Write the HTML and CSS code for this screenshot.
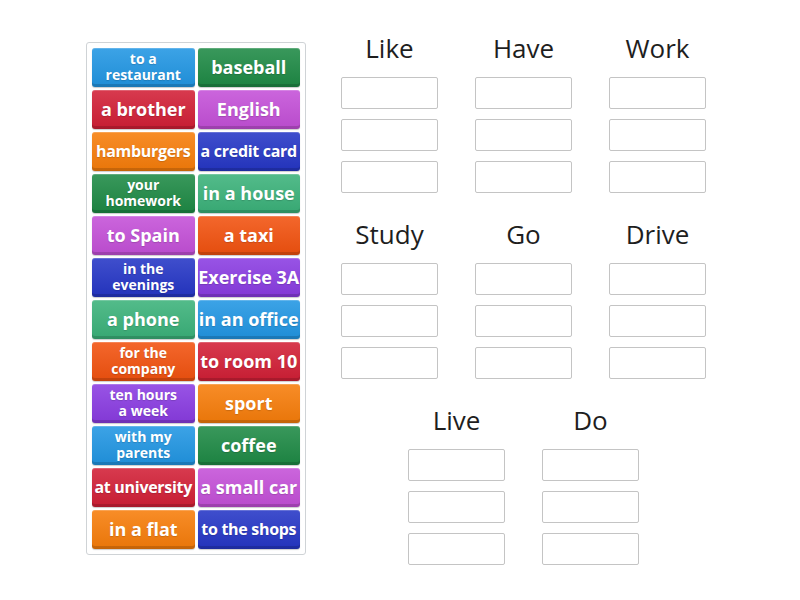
FILE: index.html
```html
<!DOCTYPE html>
<html lang="en">
<head>
    <meta charset="UTF-8">
    <meta name="viewport" content="width=device-width, initial-scale=1.0">
    <title>Group sort</title>
    <link rel="stylesheet" href="styles.css">
</head>
<body>
    <div class="board">
        <!-- Word tiles -->
        <div class="tray">
            <div class="tile blue wrap">to a<br>restaurant</div>
            <div class="tile green">baseball</div>
            <div class="tile red">a brother</div>
            <div class="tile magenta">English</div>
            <div class="tile orange fit">hamburgers</div>
            <div class="tile navy fit">a credit card</div>
            <div class="tile green wrap">your<br>homework</div>
            <div class="tile teal">in a house</div>
            <div class="tile magenta">to Spain</div>
            <div class="tile flame">a taxi</div>
            <div class="tile navy wrap">in the<br>evenings</div>
            <div class="tile purple">Exercise 3A</div>
            <div class="tile teal">a phone</div>
            <div class="tile blue">in an office</div>
            <div class="tile flame wrap">for the<br>company</div>
            <div class="tile red">to room 10</div>
            <div class="tile purple wrap">ten hours<br>a week</div>
            <div class="tile orange">sport</div>
            <div class="tile blue wrap">with my<br>parents</div>
            <div class="tile green">coffee</div>
            <div class="tile red fit">at university</div>
            <div class="tile magenta">a small car</div>
            <div class="tile orange">in a flat</div>
            <div class="tile navy fit">to the shops</div>
        </div>

        <!-- Drop groups -->
        <div class="groups">
            <div class="group">
                <div class="group-title">Like</div>
                <div class="slot"></div><div class="slot"></div><div class="slot"></div>
            </div>
            <div class="group">
                <div class="group-title">Have</div>
                <div class="slot"></div><div class="slot"></div><div class="slot"></div>
            </div>
            <div class="group">
                <div class="group-title">Work</div>
                <div class="slot"></div><div class="slot"></div><div class="slot"></div>
            </div>
            <div class="group">
                <div class="group-title">Study</div>
                <div class="slot"></div><div class="slot"></div><div class="slot"></div>
            </div>
            <div class="group">
                <div class="group-title">Go</div>
                <div class="slot"></div><div class="slot"></div><div class="slot"></div>
            </div>
            <div class="group">
                <div class="group-title">Drive</div>
                <div class="slot"></div><div class="slot"></div><div class="slot"></div>
            </div>
            <div class="group">
                <div class="group-title">Live</div>
                <div class="slot"></div><div class="slot"></div><div class="slot"></div>
            </div>
            <div class="group">
                <div class="group-title">Do</div>
                <div class="slot"></div><div class="slot"></div><div class="slot"></div>
            </div>
        </div>
    </div>
</body>
</html>
```

FILE: styles.css
```css
/* Tile colours */
:root {
    --blue: #2196e3;
    --green: #1e8a45;
    --red: #d21f36;
    --magenta: #c450d8;
    --orange: #f77d0a;
    --navy: #2536c6;
    --teal: #3bb27a;
    --flame: #f2520f;
    --purple: #8a3ce2;
    --text: #1e1e1e;
}

* {
    margin: 0;
    padding: 0;
    box-sizing: border-box;
}

body {
    font-family: 'Open Sans', 'DejaVu Sans', sans-serif;
    background: #fff;
    color: var(--text);
}

.board {
    display: flex;
    align-items: flex-start;
    gap: 35px;
    padding: 30px 0 0 86px;
}

/* Left tray with tiles */
.tray {
    flex: none;
    margin-top: 12px;
    width: 220px;
    padding: 5px;
    border: 1px solid #cfd3d6;
    border-radius: 3px;
    display: grid;
    grid-template-columns: minmax(0, 1fr) minmax(0, 1fr);
    grid-auto-rows: 39px;
    gap: 3px;
}

.tile {
    display: flex;
    align-items: center;
    justify-content: center;
    text-align: center;
    color: #fff;
    font-weight: 700;
    font-size: 18px;
    line-height: 20px;
    padding: 0 0 2px;
    border-radius: 3px;
    background-image: linear-gradient(rgba(255, 255, 255, 0.12), rgba(0, 0, 0, 0.06));
    box-shadow: inset 0 1px 0 rgba(255, 255, 255, 0.2), inset 0 -3px 0 rgba(0, 0, 0, 0.15), 0 1px 1px rgba(0, 0, 0, 0.2);
    text-shadow: 0 1px 1px rgba(0, 0, 0, 0.15);
    white-space: nowrap;
    overflow: hidden;
}

.tile.fit {
    font-size: 16px;
    letter-spacing: -0.3px;
}

.tile.wrap {
    font-size: 14px;
    line-height: 16px;
}

.blue { background-color: var(--blue); }
.green { background-color: var(--green); }
.red { background-color: var(--red); }
.magenta { background-color: var(--magenta); }
.orange { background-color: var(--orange); }
.navy { background-color: var(--navy); }
.teal { background-color: var(--teal); }
.flame { background-color: var(--flame); }
.purple { background-color: var(--purple); }

/* Drop groups */
.groups {
    flex: none;
    width: 365px;
    display: flex;
    flex-wrap: wrap;
    justify-content: center;
    column-gap: 37px;
    row-gap: 23px;
}

.group {
    width: 97px;
    display: flex;
    flex-direction: column;
    gap: 10px;
}

.group-title {
    font-size: 26px;
    line-height: 36px;
    text-align: center;
    margin-bottom: 1px;
}

.slot {
    height: 32px;
    border: 1px solid #c4c4c4;
    border-radius: 2px;
    background: #fff;
}
```
